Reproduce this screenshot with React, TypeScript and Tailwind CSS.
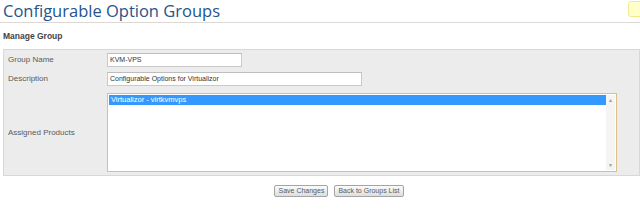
export default function App() {
  const label = "w-[103px] pl-[4px] text-[8px] text-[#5a5a5a] [font-family:'Liberation_Sans',sans-serif]";
  const field =
    "h-[14px] bg-white border border-[#cacaca] border-t-[#bdbdbd] text-[7px] leading-[12px] pl-[2px] text-[#333] [font-family:'Liberation_Sans',sans-serif]";
  const button =
    "h-[12px] px-[3px] border border-[#a4a4a4] rounded-[2px] bg-gradient-to-b from-[#fbfbfb] to-[#dedede] text-[7px] leading-[10px] text-[#5a5a5a] [font-family:'Liberation_Sans',sans-serif]";
  return (
    <div className="w-[640px] h-[211px] bg-white overflow-hidden relative">
      <div className="absolute right-[-6px] top-[1px] w-[18px] h-[16px] bg-[#ffffcc] border border-[#f3e98c] rounded-[3px]" />
      <h1 className="pl-[3px] pt-[1px] h-[22px] text-[16.5px] leading-[20px] text-[#24548f] [font-family:'Open_Sans',sans-serif]">
        Configurable Option Groups
      </h1>
      <div className="h-px bg-[#dcd8d8]" />
      <div className="pl-[3px] pt-[8px] pb-[8px] text-[8.5px] leading-[10px] font-bold text-[#444] [font-family:'Liberation_Sans',sans-serif]">
        Manage Group
      </div>
      <div className="ml-[3px] bg-[#ececec] border border-[#d8d8d8]">
        <div className="flex h-[19px]">
          <div className={`${label} leading-[19px]`}>Group Name</div>
          <div className={`${field} w-[135px] mt-[3px]`}>KVM-VPS</div>
        </div>
        <div className="flex h-[19px]">
          <div className={`${label} leading-[19px]`}>Description</div>
          <div className={`${field} w-[255px] mt-[3px]`}>Configurable Options for Virtualizor</div>
        </div>
        <div className="flex items-center pt-[5px] pb-[3px]">
          <div className={label}>Assigned Products</div>
          <div className="w-[510px] h-[79px] bg-white border border-[#dcbf86] flex p-px">
            <div className="flex-1">
              <div className="h-[10px] bg-[#3399ff] text-white text-[7.5px] leading-[10px] pl-[2px] [font-family:'Liberation_Sans',sans-serif]">
                Virtualizor - virtkvmvps
              </div>
            </div>
            <div className="w-[9px] bg-[#f4f4f4] flex flex-col justify-between items-center text-[#9a9a9a] text-[5px] leading-[8px] py-[1px]">
              <span>▲</span>
              <span>▼</span>
            </div>
          </div>
        </div>
      </div>
      <div className="flex justify-center gap-[6px] pt-[9px] pl-[38px]">
        <button className={button}>Save Changes</button>
        <button className={button}>Back to Groups List</button>
      </div>
    </div>
  );
}
